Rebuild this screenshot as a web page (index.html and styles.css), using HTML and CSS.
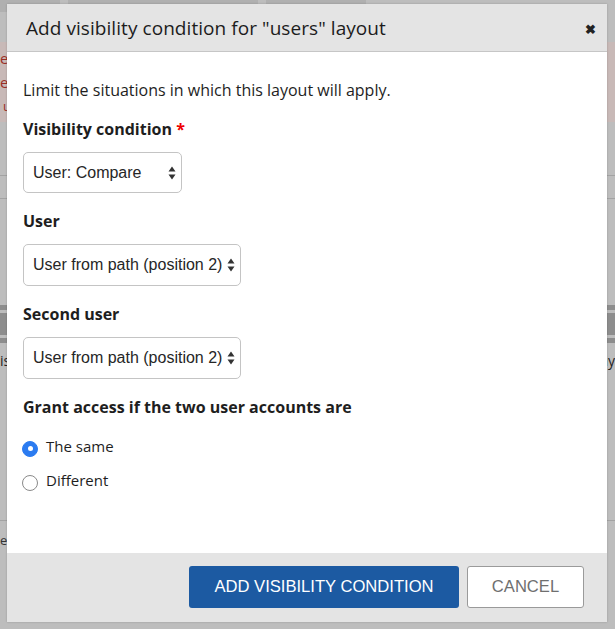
FILE: index.html
```html
<!DOCTYPE html>
<html>
<head>
<meta charset="utf-8">
<link rel="stylesheet" href="styles.css">
</head>
<body>
<div class="page">
  <div class="tabs">
    <div class="tab t1"></div>
    <div class="tab t2"></div>
    <div class="tab t3"></div>
  </div>
  <div class="alert">
    <div>e</div>
    <div>el</div>
    <div>u</div>
  </div>
  <div class="rule r1"></div>
  <div class="rule r2"></div>
  <div class="bars">
    <div class="bar"></div>
    <div class="bar thick"></div>
    <div class="bar"></div>
  </div>
  <div class="frag"><span>is</span><span>ay</span></div>
  <div class="rule r3"></div>
  <div class="frag2">e</div>
</div>

<div class="overlay">
  <div class="dialog">
    <div class="dlg-head">
      <h1 class="dlg-title">Add visibility condition for "users" layout</h1>
      <span class="close">&#x2716;</span>
    </div>
    <div class="dlg-body">
      <p class="intro">Limit the situations in which this layout will apply.</p>
      <div class="field">
        <label class="label">Visibility condition <span class="req">*</span></label>
        <div class="select s-short"><span>User: Compare</span><svg class="arrows" width="8" height="14" viewBox="0 0 8 14"><path d="M4 0.5 L7.5 5.5 L0.5 5.5 Z M4 13.5 L7.5 8.5 L0.5 8.5 Z" fill="#333"/></svg></div>
      </div>
      <div class="field">
        <label class="label">User</label>
        <div class="select"><span>User from path (position 2)</span><svg class="arrows" width="8" height="14" viewBox="0 0 8 14"><path d="M4 0.5 L7.5 5.5 L0.5 5.5 Z M4 13.5 L7.5 8.5 L0.5 8.5 Z" fill="#333"/></svg></div>
      </div>
      <div class="field">
        <label class="label">Second user</label>
        <div class="select"><span>User from path (position 2)</span><svg class="arrows" width="8" height="14" viewBox="0 0 8 14"><path d="M4 0.5 L7.5 5.5 L0.5 5.5 Z M4 13.5 L7.5 8.5 L0.5 8.5 Z" fill="#333"/></svg></div>
      </div>
      <div class="field">
        <label class="label">Grant access if the two user accounts are</label>
        <div class="radios">
          <div class="radio-row"><span class="radio on"></span>The same</div>
          <div class="radio-row"><span class="radio"></span>Different</div>
        </div>
      </div>
    </div>
    <div class="dlg-foot">
      <button class="btn primary">ADD VISIBILITY CONDITION</button>
      <button class="btn secondary">CANCEL</button>
    </div>
  </div>
</div>
</body>
</html>
```

FILE: styles.css
```css
* { box-sizing: border-box; }
html, body { margin: 0; padding: 0; }
body {
  width: 615px;
  height: 629px;
  overflow: hidden;
  background: #bdbdbd;
  font-family: "Open Sans", "Noto Sans", sans-serif;
  position: relative;
}
.page { height: 629px; }
.tabs { display: flex; gap: 8px; height: 12px; }
.tab { background: #b0b0b0; }
.t1 { width: 60px; }
.t2 { width: 190px; }
.t3 { width: 100px; }
.alert {
  margin-top: 30px;
  height: 80px;
  background: #c8b9b7;
  color: #9b2f27;
  font-size: 15px;
  line-height: 24px;
  padding-top: 4px;
}
.alert div:nth-child(3) { font-size: 13px; margin-left: 3px; }
.rule { height: 1px; background: #a3a3a3; }
.r1 { margin-top: 53px; }
.r2 { margin-top: 22px; }
.bars { margin-top: 106px; }
.bar { height: 5px; background: #8d8d8d; margin-bottom: 3px; }
.bar.thick { height: 22px; }
.frag { font-size: 14px; color: #222; display: flex; justify-content: space-between; margin-top: 8px; }
.r3 { margin-top: 150px; }
.frag2 { font-size: 13px; color: #333; margin-top: 10px; }

.overlay {
  position: absolute;
  left: 7px;
  top: 4px;
}
.dialog {
  width: 600px;
  height: 618px;
  background: #fff;
  display: flex;
  flex-direction: column;
  box-shadow: 0 0 2px rgba(0,0,0,0.2);
}
.dlg-head {
  height: 48px;
  background: #e4e4e4;
  border-bottom: 1px solid #c6c6c6;
  display: flex;
  align-items: center;
  justify-content: space-between;
  padding: 0 11px 0 19px;
}
.dlg-title {
  margin: 0;
  font-size: 19px;
  font-weight: 400;
  color: #1c1c1c;
  letter-spacing: 0.06px;
}
.close { font-size: 13px; color: #222; font-weight: bold; margin-top: 2px; }
.dlg-body {
  flex: 1;
  padding: 27px 16px 0 16px;
  color: #1e1e1e;
}
.intro { margin: 0 0 17px 0; font-size: 16px; line-height: 22px; }
.field { margin-bottom: 17px; }
.label { display: block; font-size: 16px; font-weight: 700; line-height: 22px; margin-bottom: 12px; }
.req { color: #e00; }
.select {
  width: 218px;
  height: 42px;
  border: 1px solid #c4c4c4;
  border-radius: 5px;
  display: flex;
  align-items: center;
  justify-content: space-between;
  padding: 0 5px 0 9px;
  font-family: "Liberation Sans", Arial, sans-serif;
  font-size: 16px;
  color: #262626;
}
.select.s-short { width: 159px; padding-right: 5px; height: 41px; }
.arrows { display: block; flex: none; }
.radios { padding-top: 5px; }
.radio-row { display: flex; align-items: center; font-size: 15px; line-height: 22px; margin-bottom: 12px; margin-left: -1px; }
.radio {
  width: 16px; height: 16px; border-radius: 50%;
  border: 1px solid #8a8a8a; background: #fff;
  margin-right: 8px; margin-top: 5px;
  position: relative;
  flex: none;
}
.radio.on { background: #2b7bf0; border-color: #2b7bf0; }
.radio.on::after {
  content: ""; position: absolute; left: 4.5px; top: 4.5px; width: 5px; height: 5px; border-radius: 50%; background: #fff;
}
.dlg-foot {
  height: 69px;
  background: #e4e4e4;
  display: flex;
  justify-content: flex-end;
  align-items: flex-start;
  padding: 13px 23px 0 0;
  gap: 8px;
}
.btn {
  height: 42px;
  border-radius: 3px;
  font-family: "Liberation Sans", Arial, sans-serif;
  font-size: 16.6px;
  cursor: pointer;
}
.primary { width: 270px; background: #1c5aa2; color: #fff; border: none; }
.secondary { width: 117px; background: #fff; color: #6f6f6f; border: 1px solid #9a9a9a; }
```
